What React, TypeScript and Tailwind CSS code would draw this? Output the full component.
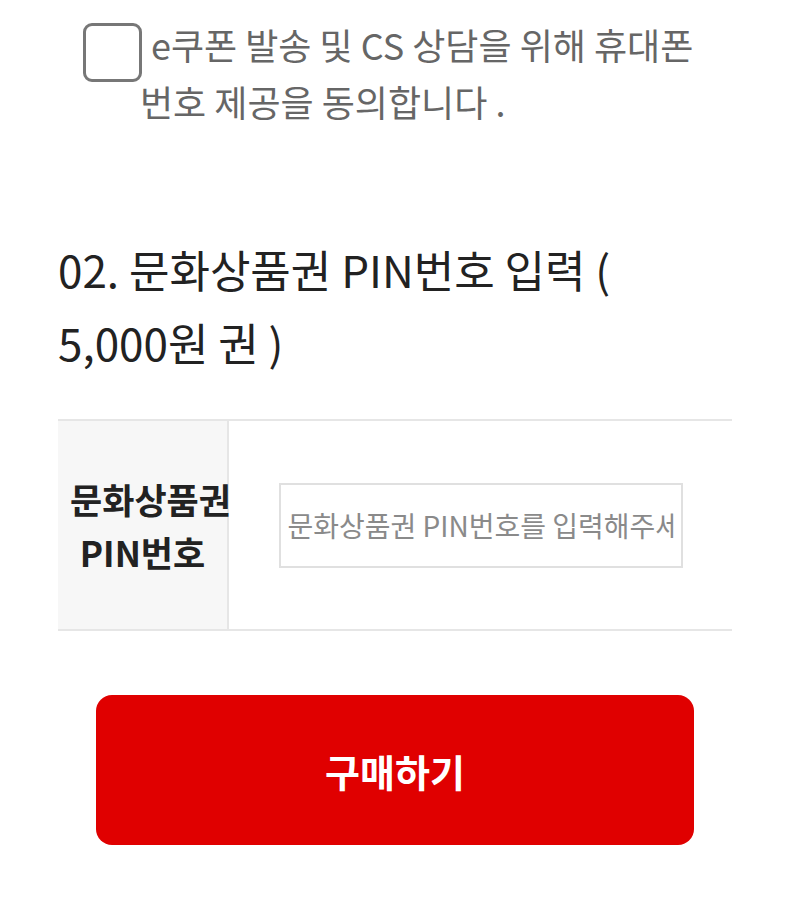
export default function App() {
  return (
    <div
      className="w-[800px] h-[900px] bg-white overflow-hidden"
      style={{ fontFamily: '"Noto Sans CJK KR", "Noto Sans", sans-serif' }}
    >
      <div className="w-[674px] ml-[58px]">
        <p className="h-[131px] pt-[16px] pl-[82px] pr-[14px] indent-[-57px] text-[36px] leading-[57px] text-[#666] break-keep">
          <span className="inline-block indent-0 w-[59px] h-[59px] mr-[9px] mb-[-10px] border-[3px] border-[#777] rounded-[9px] align-[-12px]" />
          e쿠폰 발송 및 CS 상담을 위해 휴대폰 번호 제공을 동의합니다 .
        </p>

        <h2 className="mt-[102px] text-[44px] leading-[73px] font-normal text-[#222] break-keep">
          02. 문화상품권 PIN번호 입력 ( 5,000원 권 )
        </h2>

        <div className="mt-[40px] flex h-[212px] border-t-2 border-b-2 border-[#e6e6e6]">
          <div className="w-[171px] shrink-0 flex items-center px-[12px] bg-[#f7f7f7] border-r-2 border-[#e6e6e6]">
            <div className="w-full text-center text-[35px] leading-[53px] font-bold text-[#222] whitespace-nowrap">
              문화상품권
              <br />
              PIN번호
            </div>
          </div>
          <div className="flex-1 flex items-center justify-center">
            <input
              type="text"
              placeholder="문화상품권 PIN번호를 입력해주세요"
              className="w-[404px] h-[85px] px-[7px] border-2 border-[#e0e0e0] bg-white text-[28px] text-[#333] placeholder:text-[#8a8a8a] outline-none"
            />
          </div>
        </div>

        <div className="mt-[64px] px-[38px]">
          <button className="w-full h-[150px] rounded-[16px] bg-[#e00000] text-white text-[38px] font-bold">
            구매하기
          </button>
        </div>
      </div>
    </div>
  )
}
